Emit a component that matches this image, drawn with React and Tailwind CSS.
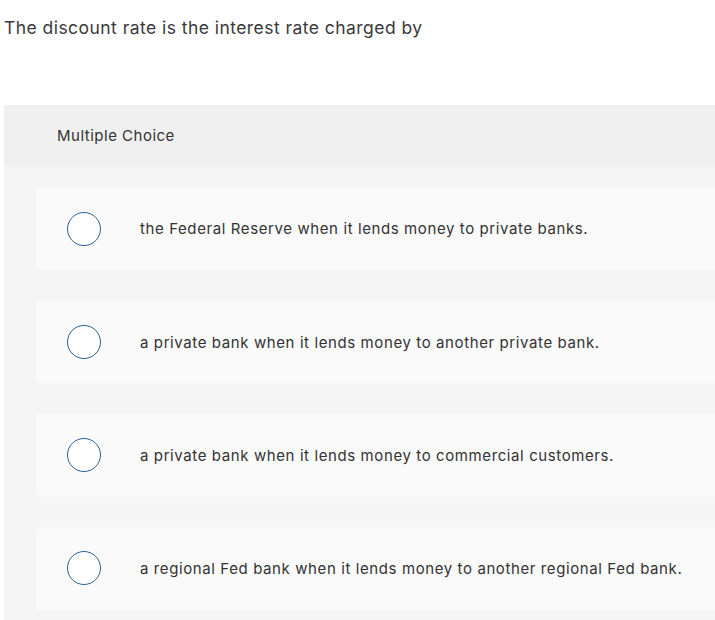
import React from "react";

const options = [
  "the Federal Reserve when it lends money to private banks.",
  "a private bank when it lends money to another private bank.",
  "a private bank when it lends money to commercial customers.",
  "a regional Fed bank when it lends money to another regional Fed bank.",
];

export default function App() {
  return (
    <div
      className="w-[715px] h-[620px] overflow-hidden bg-white text-[#333]"
      style={{ fontFamily: "Inter, 'Open Sans', sans-serif" }}
    >
      {/* Question prompt */}
      <p className="pl-1 pt-[15px] text-[17.5px] leading-[26px] tracking-[0.45px] text-[#3a3a3a]">
        The discount rate is the interest rate charged by
      </p>

      {/* Answer panel */}
      <div className="ml-1 mt-[64px] w-[760px] rounded-tl-sm bg-[#f5f5f5]">
        <div className="h-[62px] flex items-center pl-[53px] bg-[#f0f0f0] text-[15px] tracking-[0.5px] text-[#333]">
          Multiple Choice
        </div>
        <div className="pt-5 pl-8 flex flex-col gap-[30.33px] pb-4">
          {options.map((text) => (
            <div
              key={text}
              className="h-[83px] flex items-center rounded bg-[#fafafa]"
            >
              <span className="ml-[31px] w-[34px] h-[34px] shrink-0 rounded-full border-[1.5px] border-[#2b5f9a] bg-white" />
              <span className="ml-[39px] pt-[2px] text-[15px] tracking-[0.6px] text-[#333]">{text}</span>
            </div>
          ))}
        </div>
      </div>
    </div>
  );
}
